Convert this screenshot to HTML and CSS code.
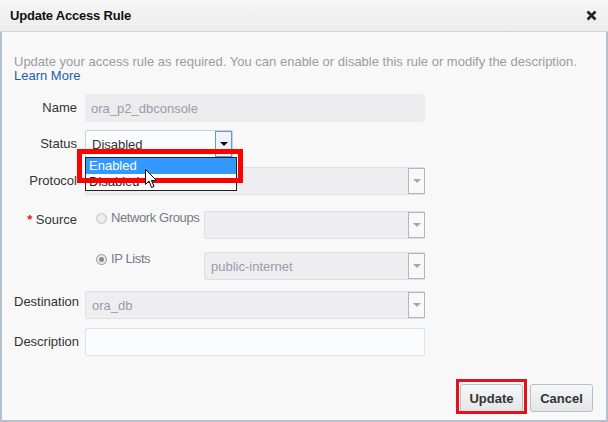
FILE: index.html
```html
<!DOCTYPE html>
<html lang="en">
<head>
    <meta charset="UTF-8">
    <title>Update Access Rule</title>
    <link rel="stylesheet" href="styles.css">
</head>
<body>
    <div class="dialog">
        <div class="dialog-header">
            <span class="dialog-title">Update Access Rule</span>
            <svg class="close" width="11" height="11" viewBox="0 0 11 11">
                <path d="M1.5 1.5 L9.5 9.5 M9.5 1.5 L1.5 9.5" stroke="#222" stroke-width="2.6"/>
            </svg>
        </div>
        <div class="dialog-body">
            <p class="intro">Update your access rule as required. You can enable or disable this rule or modify the description.<br><a href="#">Learn More</a></p>

            <div class="row row-name">
                <label class="label">Name</label>
                <div class="field input readonly">ora_p2_dbconsole</div>
            </div>

            <div class="row row-status">
                <label class="label">Status</label>
                <div class="status-wrap">
                    <div class="field select status">
                        <span>Disabled</span>
                        <span class="arrow active"><i></i></span>
                    </div>
                    <ul class="dropdown">
                        <li class="selected">Enabled</li>
                        <li>Disabled</li>
                    </ul>
                    <div class="mark mark-list"></div>
                    <svg class="cursor" width="13" height="20" viewBox="0 0 13 20">
                        <path d="M0.5 0.5 L0.5 15.5 L4 12 L6.5 18.5 L9 17.5 L6.5 11.5 L11.5 11.5 Z" fill="#fff" stroke="#000" stroke-width="1"/>
                    </svg>
                </div>
            </div>

            <div class="row row-protocol">
                <label class="label">Protocol</label>
                <div class="field select disabled wide">
                    <span></span>
                    <span class="arrow"><i></i></span>
                </div>
            </div>

            <div class="row row-source">
                <label class="label top"><span class="req">*</span> Source</label>
                <div class="source">
                    <div class="source-opt opt-groups">
                        <span class="radio"></span>
                        <span class="radio-text">Network Groups</span>
                        <div class="field select disabled">
                            <span></span>
                            <span class="arrow"><i></i></span>
                        </div>
                    </div>
                    <div class="source-opt">
                        <span class="radio checked"></span>
                        <span class="radio-text">IP Lists</span>
                        <div class="field select disabled">
                            <span>public-internet</span>
                            <span class="arrow"><i></i></span>
                        </div>
                    </div>
                </div>
            </div>

            <div class="row row-dest">
                <label class="label top">Destination</label>
                <div class="field select disabled wide">
                    <span>ora_db</span>
                    <span class="arrow"><i></i></span>
                </div>
            </div>

            <div class="row">
                <label class="label">Description</label>
                <div class="field input text"></div>
            </div>

            <div class="dialog-footer">
                <div class="btn-wrap">
                    <button class="btn">Update</button>
                    <div class="mark mark-btn"></div>
                </div>
                <button class="btn">Cancel</button>
            </div>
        </div>
    </div>
</body>
</html>
```

FILE: styles.css
```css
body {
    margin: 0;
    padding: 0;
    font-family: "Liberation Sans", Arial, sans-serif;
    font-size: 13px;
    color: #333;
    background-color: #f8f8f8;
}

.dialog {
    width: 608px;
    height: 422px;
    box-sizing: border-box;
    display: flex;
    flex-direction: column;
}

.dialog-header {
    height: 31px;
    border-bottom: 1px solid #cdd5dd;
    background: linear-gradient(#f6f6f6, #ececec);
    display: flex;
    align-items: center;
    justify-content: space-between;
    padding: 0 10px 0 10px;
    flex-shrink: 0;
}

.dialog-title {
    font-weight: bold;
    font-size: 13px;
    letter-spacing: -0.2px;
    color: #111;
}

.close {
    margin-right: 1px;
}

.dialog-body {
    flex: 1;
    border: 1px solid #b4c2d0;
    border-top: none;
    border-width: 0 2px 2px 2px;
    padding: 23px 13px 0 12px;
    position: relative;
}

.intro {
    margin: 0 0 11px 0;
    line-height: 14px;
    color: #9c9c9c;
}

.intro a {
    color: #1b5ea9;
    text-decoration: none;
}

.row {
    display: flex;
    align-items: center;
    gap: 8px;
}

.row-name { margin-bottom: 8px; }
.row-status { margin-bottom: 9px; }
.row-protocol { margin-bottom: 16px; }
.row-source { margin-bottom: 11px; align-items: flex-start; }
.row-dest { margin-bottom: 9px; align-items: flex-start; }

.label {
    width: 63px;
    text-align: right;
    flex-shrink: 0;
    line-height: 14px;
}

.label.top {
    padding-top: 4px;
}

.row-source .label.top {
    padding-top: 2px;
}

.req {
    color: #e02020;
    font-weight: bold;
}

.field {
    height: 28px;
    box-sizing: border-box;
    display: flex;
    align-items: center;
    border: 1px solid transparent;
    border-radius: 2px;
}

.input {
    width: 340px;
    padding-left: 5px;
}

.readonly {
    background-color: #ececef;
    color: #9a9aab;
}

.text {
    background-color: #fbfcfd;
    border-color: #dde2e7;
}

.select {
    justify-content: space-between;
    padding-left: 6px;
}

.select.wide {
    width: 340px;
}

.disabled {
    background-color: #eeeef1;
    border-color: #dedfe3;
    color: #9a9aab;
}

.arrow {
    width: 17px;
    height: 26px;
    box-sizing: border-box;
    border: 1px solid #b3b7bc;
    background-color: #f8f8f8;
    display: flex;
    align-items: center;
    justify-content: center;
    margin-right: -1px;
}

.arrow i {
    width: 0;
    height: 0;
    border-left: 4px solid transparent;
    border-right: 4px solid transparent;
    border-top: 4px solid #a8a8a8;
}

.status-wrap {
    position: relative;
}

.status {
    width: 148px;
    background-color: #fbfcfd;
    border-color: #c9d2db;
    color: #333;
}

.arrow.active {
    border-color: #6b97c6;
    background-color: #eef4fa;
    margin-right: 0;
}

.arrow.active i {
    border-top-color: #111;
}

.dropdown {
    position: absolute;
    left: 0;
    top: 27px;
    width: 150px;
    margin: 0;
    padding: 0;
    list-style: none;
    background: #fff;
    border: 1px solid #222;
    z-index: 2;
}

.dropdown li {
    height: 16px;
    line-height: 16px;
    padding-left: 3px;
    color: #222;
}

.dropdown li.selected {
    background-color: #3399ff;
    color: #fff;
}

.mark {
    position: absolute;
    border: 5px solid #ff0000;
    z-index: 3;
}

.mark-list {
    left: -8px;
    top: 19px;
    width: 156px;
    height: 24px;
}

.cursor {
    position: absolute;
    left: 60px;
    top: 39px;
    z-index: 4;
}

.source {
    display: flex;
    flex-direction: column;
}

.source-opt {
    display: flex;
    align-items: flex-start;
}

.opt-groups {
    margin-bottom: 13px;
}

.radio {
    width: 11px;
    height: 11px;
    box-sizing: border-box;
    border-radius: 50%;
    border: 1px solid #c4c4c4;
    background: radial-gradient(#f4f4f4, #e0e0e0);
    margin: 2px 4px 0 11px;
    position: relative;
    flex-shrink: 0;
}

.radio.checked {
    border-color: #999;
}

.radio.checked::after {
    content: "";
    position: absolute;
    left: 2px;
    top: 2px;
    width: 5px;
    height: 5px;
    border-radius: 50%;
    background-color: #8a8a8a;
}

.radio-text {
    width: 93px;
    flex-shrink: 0;
    white-space: nowrap;
    letter-spacing: -0.4px;
    line-height: 14px;
    color: #777a88;
}

.source .select {
    width: 221px;
}

.dialog-footer {
    display: flex;
    justify-content: flex-end;
    gap: 7px;
    margin-top: 28px;
}

.btn-wrap {
    position: relative;
}

.btn {
    height: 28px;
    width: 63px;
    padding: 0;
    font-family: "Liberation Sans", Arial, sans-serif;
    font-size: 13px;
    font-weight: bold;
    color: #333;
    background: linear-gradient(#f6f7f8, #e3e5e8);
    border: 1px solid #b8bec6;
    border-radius: 3px;
}

.mark-btn {
    left: -4px;
    right: -4px;
    top: -5px;
    bottom: -2px;
    border-width: 3px;
    border-color: #e3121c;
}
```
